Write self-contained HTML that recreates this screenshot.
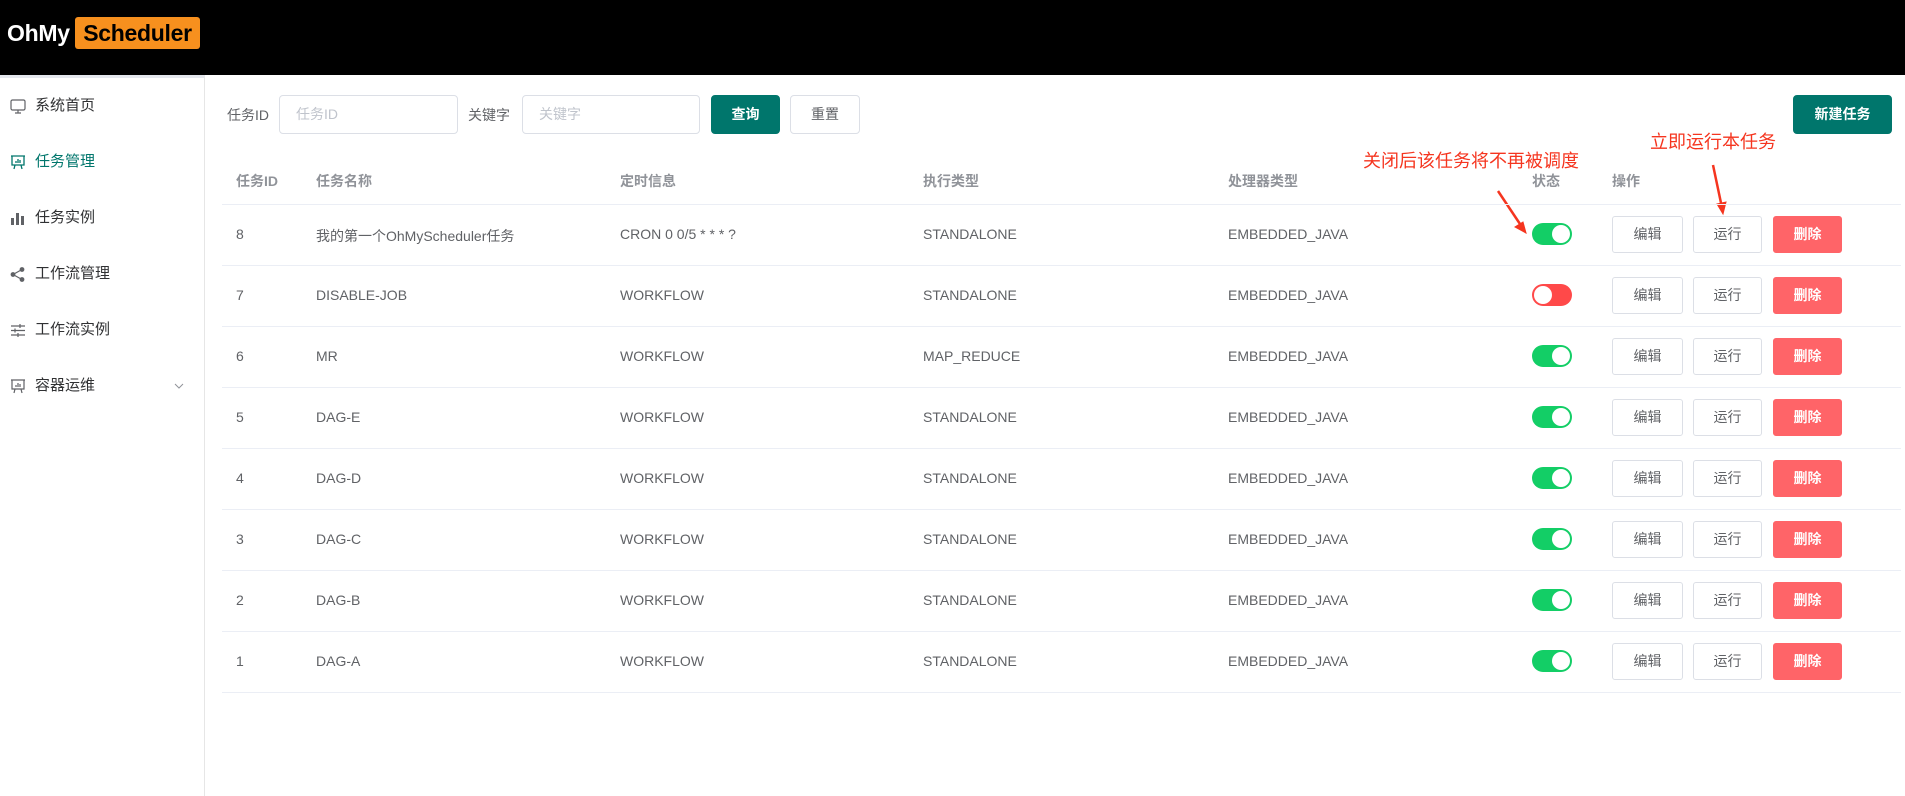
<!DOCTYPE html>
<html><head><meta charset="utf-8"><style>
*{box-sizing:border-box;margin:0;padding:0}
body{width:1905px;height:796px;overflow:hidden;background:#fff;font-family:"Liberation Sans","Noto Sans CJK SC",sans-serif;color:#606266;font-size:14px;position:relative}
.hdr{position:absolute;left:0;top:0;width:1905px;height:75px;background:#000}
.logo1{position:absolute;left:7px;top:17px;height:32px;line-height:32px;color:#fff;font-weight:bold;font-size:23px;letter-spacing:-0.3px}
.logo2{position:absolute;left:75px;top:17px;width:125px;height:32px;line-height:32px;background:#f7901e;border-radius:3px;color:#000;font-weight:bold;font-size:23px;text-align:center;letter-spacing:-0.3px}
.side{position:absolute;left:0;top:75px;width:205px;height:721px;border-right:1px solid #e6e6e6;border-top:3px solid #e4e7ed}
.mi{position:absolute;left:0;width:204px;height:40px;line-height:40px;font-size:15px;color:#303133}
.mi .t{position:absolute;left:35px}
.mi svg{position:absolute;left:10px;top:13px}
.a{position:absolute}
.inp{position:absolute;height:39px;border:1px solid #dcdfe6;border-radius:4px;color:#c0c4cc;padding-left:16px;line-height:37px}
.btn{position:absolute;height:39px;border:1px solid #dcdfe6;border-radius:4px;text-align:center;line-height:37px;color:#606266;background:#fff}
.pri{background:#00766c;border-color:#00766c;color:#fff;font-weight:bold}
.line{position:absolute;left:222px;width:1679px;height:1px;background:#ebeef5}
.th{position:absolute;font-weight:bold;color:#909399}
.td{position:absolute;color:#606266}
.sw{position:absolute;width:40px;height:22px;border-radius:11px}
.sw:after{content:"";position:absolute;top:2px;width:18px;height:18px;border-radius:50%;background:#fff}
.on{background:#13ce66}.on:after{right:2px}
.off{background:#ff4949}.off:after{left:2px}
.b2{position:absolute;height:37px;border:1px solid #dcdfe6;border-radius:3px;text-align:center;line-height:35px;color:#606266;background:#fff;font-size:14px}
.del{background:#ff6468;border-color:#ff6468;color:#fff;font-weight:bold}
.ann{position:absolute;color:#f5351f;font-size:18px;white-space:nowrap}
</style></head><body>
<div class="hdr"><div class="logo1">OhMy</div><div class="logo2">Scheduler</div></div>
<div class="side">
<div class="mi" style="top:8px"><svg width="16" height="15" viewBox="0 0 16 15" fill="none" stroke="#606266" stroke-width="1.2"><rect x="1" y="1" width="14" height="10" rx="1.5"/><path d="M8 11v3M5 14h6"/></svg><span class="t">系统首页</span></div>
<div class="mi" style="top:64px;color:#00766c"><svg width="16" height="15" viewBox="0 0 16 15" fill="none" stroke="#00766c" stroke-width="1.3"><path d="M1 1h14M2 1v9h12V1M5 10l-1 4M11 10l1 4M6 8V6M8 8V4M10 8V5"/></svg><span class="t">任务管理</span></div>
<div class="mi" style="top:120px"><svg width="16" height="15" viewBox="0 0 16 15" fill="#606266"><rect x="1" y="7" width="3" height="7"/><rect x="6" y="2" width="3" height="12"/><rect x="11" y="5" width="3" height="9"/></svg><span class="t">任务实例</span></div>
<div class="mi" style="top:176px"><svg width="16" height="15" viewBox="0 0 16 15" fill="#606266" stroke="#606266" stroke-width="1.2"><circle cx="3" cy="7.5" r="1.8"/><circle cx="12" cy="2.5" r="1.8"/><circle cx="12" cy="12.5" r="1.8"/><path d="M3 7.5L12 2.5M3 7.5L12 12.5" fill="none"/></svg><span class="t">工作流管理</span></div>
<div class="mi" style="top:232px"><svg width="16" height="15" viewBox="0 0 16 15" fill="none" stroke="#606266" stroke-width="1.2"><path d="M1 3h14M1 7.5h14M1 12h14M10 1v4M5 5.5v4M8 10v4"/></svg><span class="t">工作流实例</span></div>
<div class="mi" style="top:288px"><svg width="16" height="15" viewBox="0 0 16 15" fill="none" stroke="#606266" stroke-width="1.2"><path d="M1 1h14M2 1v9h12V1M5 10l-1 4M11 10l1 4M6 8V6M8 8V4M10 8V5"/></svg><span class="t">容器运维</span><svg style="left:174px;top:17px" width="10" height="6" viewBox="0 0 10 6" fill="none" stroke="#909399" stroke-width="1"><path d="M1 1l4 4 4-4"/></svg></div>
</div>
<div class="a" style="left:227px;top:105px;line-height:20px">任务ID</div>
<div class="inp" style="left:279px;top:95px;width:179px">任务ID</div>
<div class="a" style="left:468px;top:105px;line-height:20px">关键字</div>
<div class="inp" style="left:522px;top:95px;width:178px">关键字</div>
<div class="btn pri" style="left:711px;top:95px;width:69px">查询</div>
<div class="btn" style="left:790px;top:95px;width:70px">重置</div>
<div class="btn pri" style="left:1793px;top:95px;width:99px">新建任务</div>
<div class="ann" style="left:1363px;top:147px">关闭后该任务将不再被调度</div>
<div class="ann" style="left:1650px;top:128px">立即运行本任务</div>
<svg class="a" style="left:0;top:0" width="1905" height="796"><g stroke="#f5351f" stroke-width="2.5" fill="#f5351f"><path d="M1498 191L1520 224"/><path d="M1526 233l-11-6 8-5z" stroke-width="1"/><path d="M1713 165L1721 203"/><path d="M1723 214l-6-10 9-2z" stroke-width="1"/></g></svg>
<div class="th" style="left:236px;top:171px">任务ID</div>
<div class="th" style="left:316px;top:171px">任务名称</div>
<div class="th" style="left:620px;top:171px">定时信息</div>
<div class="th" style="left:923px;top:171px">执行类型</div>
<div class="th" style="left:1228px;top:171px">处理器类型</div>
<div class="th" style="left:1532px;top:171px">状态</div>
<div class="th" style="left:1612px;top:171px">操作</div>
<div class="line" style="top:204px"></div>
<div id="rows"></div>
<script>
var d=[["8","我的第一个OhMyScheduler任务","CRON 0 0/5 * * * ?","STANDALONE",1],["7","DISABLE-JOB","WORKFLOW","STANDALONE",0],["6","MR","WORKFLOW","MAP_REDUCE",1],["5","DAG-E","WORKFLOW","STANDALONE",1],["4","DAG-D","WORKFLOW","STANDALONE",1],["3","DAG-C","WORKFLOW","STANDALONE",1],["2","DAG-B","WORKFLOW","STANDALONE",1],["1","DAG-A","WORKFLOW","STANDALONE",1]];
var h="";d.forEach(function(r,i){var y=204+61*i,c=y+30;
h+='<div class="td" style="left:236px;top:'+(c-8)+'px">'+r[0]+'</div><div class="td" style="left:316px;top:'+(c-8)+'px">'+r[1]+'</div><div class="td" style="left:620px;top:'+(c-8)+'px">'+r[2]+'</div><div class="td" style="left:923px;top:'+(c-8)+'px">'+r[3]+'</div><div class="td" style="left:1228px;top:'+(c-8)+'px">EMBEDDED_JAVA</div>';
h+='<div class="sw '+(r[4]?'on':'off')+'" style="left:1532px;top:'+(c-11)+'px"></div>';
h+='<div class="b2" style="left:1612px;top:'+(c-18)+'px;width:71px">编辑</div><div class="b2" style="left:1693px;top:'+(c-18)+'px;width:69px">运行</div><div class="b2 del" style="left:1773px;top:'+(c-18)+'px;width:69px">删除</div>';
h+='<div class="line" style="top:'+(y+61)+'px"></div>';});
document.getElementById("rows").innerHTML=h;
</script>
</body></html>
